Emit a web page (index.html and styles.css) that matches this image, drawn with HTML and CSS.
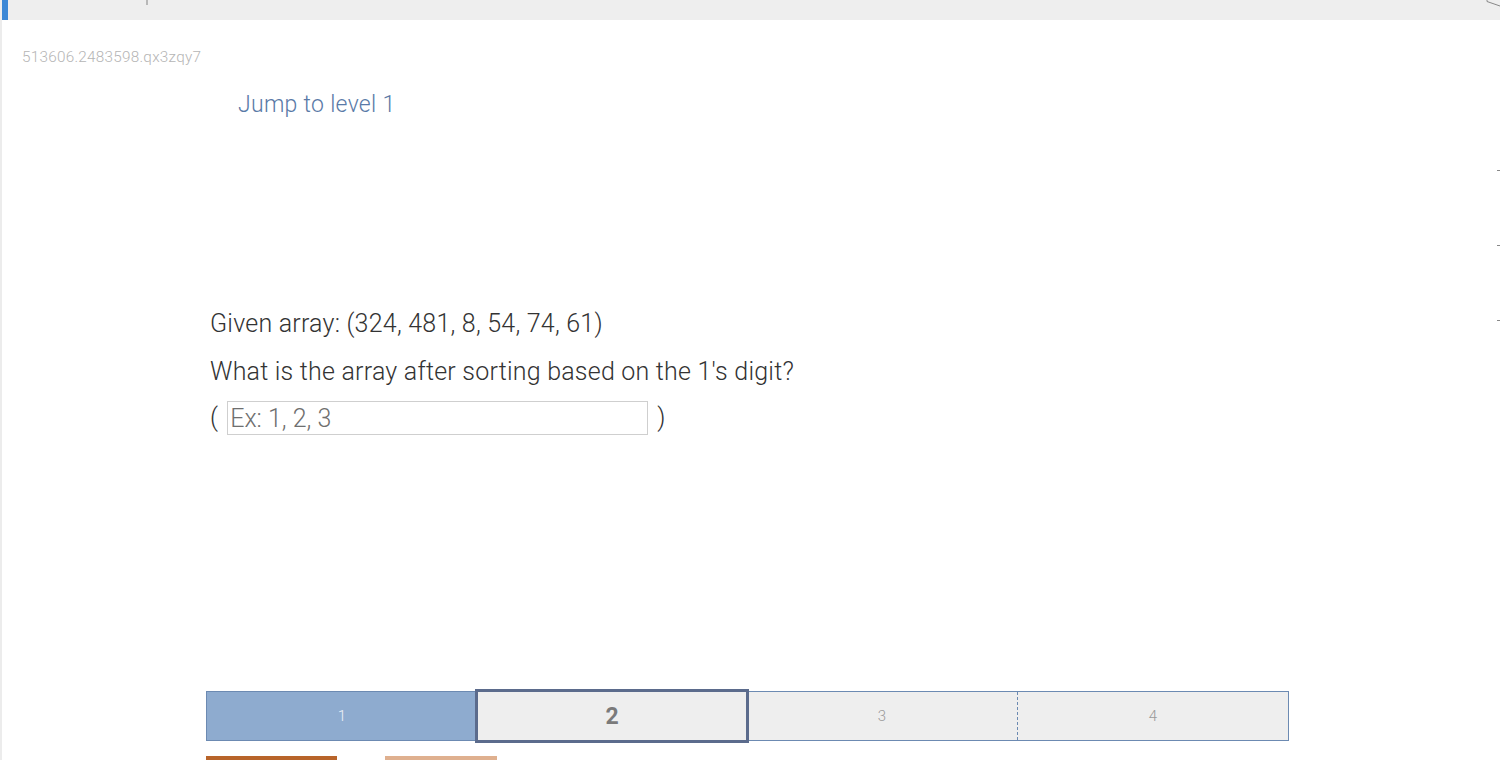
FILE: index.html
```html
<!DOCTYPE html>
<html>
<head>
<meta charset="utf-8">
<link rel="stylesheet" href="styles.css">
</head>
<body>
<div class="topbar">
  <div class="tab-active"></div>
  <div class="tick"></div>
  <svg class="corner" width="14" height="8" viewBox="0 0 14 8"><path d="M1 0 L1 1.5 L14 6" fill="none" stroke="#888" stroke-width="1"/></svg>
</div>
<div class="page">
  <div class="rail"><span></span><span></span><span></span></div>
  <div class="activity-id">513606.2483598.qx3zqy7</div>
  <a class="jump">Jump to level 1</a>
  <div class="question">
    <p class="line">Given array: (324, 481, 8, 54, 74, 61)</p>
    <p class="line">What is the array after sorting based on the 1's digit?</p>
    <p class="line answer">(<input class="answer-input" type="text" placeholder="Ex: 1, 2, 3">)</p>
  </div>
  <div class="levels">
    <div class="level done">1</div>
    <div class="level current">2</div>
    <div class="level">3</div>
    <div class="level dashed">4</div>
  </div>
  <div class="buttons">
    <div class="btn-check"></div>
    <div class="btn-next"></div>
  </div>
</div>
</body>
</html>
```

FILE: styles.css
```css
html, body {
  margin: 0;
  padding: 0;
  background: #fff;
  font-family: Roboto, "Liberation Sans", Arial, sans-serif;
  overflow: hidden;
  height: 760px;
}

.topbar {
  height: 20px;
  background: #eeeeee;
  display: flex;
  position: relative;
}

.tab-active {
  margin-left: 2px;
  width: 6px;
  height: 20px;
  background: #3c88d6;
}

.tick {
  margin-left: 138px;
  width: 2px;
  height: 5px;
  background: #b8b8b8;
}

.corner {
  position: absolute;
  right: 0;
  top: 0;
}

.page {
  position: relative;
  border-left: 2px solid #ececec;
  height: 740px;
  box-sizing: border-box;
}

.rail {
  position: absolute;
  right: 0;
  top: 150px;
  display: flex;
  flex-direction: column;
  gap: 74px;
}

.rail span {
  display: block;
  width: 3px;
  height: 1px;
  background: #888;
}

.activity-id {
  padding: 28px 0 0 20px;
  font-size: 15.3px;
  line-height: 18px;
  font-weight: 300;
  letter-spacing: 0.25px;
  color: #b5b5b5;
}

.jump {
  display: block;
  margin: 25px 0 0 236px;
  font-size: 23px;
  line-height: 28px;
  font-weight: 300;
  letter-spacing: 0.3px;
  color: #5a7aa7;
}

.question {
  margin: 181px 0 0 208px;
  color: #333;
  font-size: 25px;
  font-weight: 300;
  letter-spacing: 0.22px;
}

.line {
  margin: 0;
  height: 48px;
  line-height: 48px;
}

.answer {
  display: flex;
  align-items: center;
  height: 44px;
  line-height: 44px;
}

.answer-input {
  margin: 0 9px 0 9px;
  width: 421px;
  height: 34px;
  box-sizing: border-box;
  border: 1px solid #cfcfcf;
  padding: 0 2px;
  font-family: Roboto, "Liberation Sans", Arial, sans-serif;
  font-size: 25px;
  font-weight: 300;
  color: #333;
  outline: none;
}

.answer-input::placeholder {
  color: #6f6f6f;
}

.levels {
  margin: 251px 0 0 204px;
  width: 1083px;
  height: 50px;
  display: flex;
  border: 1px solid #6c8ab2;
  box-sizing: border-box;
  background: #eeeeee;
}

.level {
  flex: 1;
  display: flex;
  align-items: center;
  justify-content: center;
  font-size: 15px;
  font-weight: 300;
  color: #999999;
}

.level.done {
  background: #8eabcf;
  color: #eef2f8;
}

.level.current {
  outline: 3px solid #5b6b8c;
  outline-offset: -1px;
  margin: -1px 0;
  font-size: 23px;
  font-weight: 700;
  color: #7a7a7a;
}

.level.dashed {
  border-left: 1px dashed #6c8ab2;
}

.buttons {
  display: flex;
  margin: 15px 0 0 204px;
  gap: 48px;
}

.btn-check {
  width: 131px;
  height: 30px;
  background: #b8642a;
}

.btn-next {
  width: 112px;
  height: 30px;
  background: #dfb08f;
}
```
